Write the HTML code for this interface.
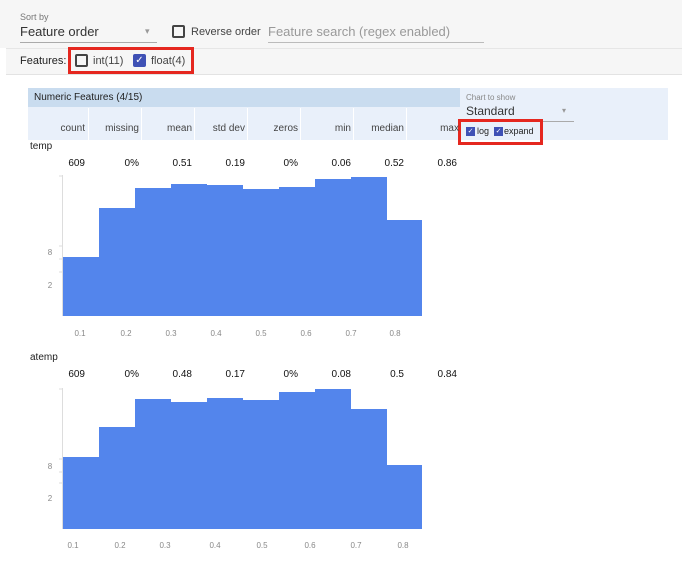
<!DOCTYPE html>
<html><head><style>
body{margin:0;width:682px;height:564px;background:#fff;font-family:"Liberation Sans",sans-serif;position:relative;overflow:hidden;color:#222}
.a{position:absolute;white-space:nowrap}
.cb{position:absolute;box-sizing:border-box}
</style></head><body>
<div class="a" style="left:0;top:0;width:682px;height:48px;background:#f6f6f6"></div>
<div class="a" style="left:6px;top:48px;width:676px;height:25px;background:#f6f6f6;border-top:1px solid #e6e6e6;border-bottom:1px solid #e3e3e3"></div>
<div class="a" style="left:20px;top:12px;font-size:9px;color:#777">Sort by</div>
<div class="a" style="left:20px;top:24px;font-size:13px;color:#333">Feature order</div>
<div class="a" style="left:145px;top:26px;font-size:9px;color:#999">▾</div>
<div class="a" style="left:20px;top:42px;width:137px;height:1px;background:#aaa"></div>
<div class="cb" style="left:172px;top:25px;width:13px;height:13px;border:2px solid #444;border-radius:2px"></div>
<div class="a" style="left:191px;top:26px;font-size:11px;color:#444">Reverse order</div>
<div class="a" style="left:268px;top:24px;font-size:13px;color:#999">Feature search (regex enabled)</div>
<div class="a" style="left:268px;top:42px;width:216px;height:1px;background:#bbb"></div>
<div class="a" style="left:20px;top:55px;font-size:11px;color:#222">Features:</div>
<div class="cb" style="left:68px;top:47px;width:126px;height:27px;border:3px solid #e5271f"></div>
<div class="cb" style="left:75px;top:54px;width:13px;height:13px;border:2px solid #444;border-radius:2px"></div>
<div class="a" style="left:93px;top:55px;font-size:11px;color:#444">int(11)</div>
<div class="cb" style="left:133px;top:54px;width:13px;height:13px;background:#3f51b5;border-radius:2px;color:#fff;font-size:10px;line-height:13px;text-align:center">✓</div>
<div class="a" style="left:151px;top:55px;font-size:11px;color:#444">float(4)</div>

<div class="a" style="left:28px;top:88px;width:432px;height:19px;background:#c9dcef"></div>
<div class="a" style="left:34px;top:92px;font-size:10px;color:#222">Numeric Features (4/15)</div>
<div class="a" style="left:28px;top:107px;width:432px;height:33px;background:#e9f0fa"></div>
<div class="a" style="left:460px;top:88px;width:208px;height:52px;background:#e9f0fa"></div>
<div class="a" style="left:466px;top:93px;font-size:8px;color:#888">Chart to show</div>
<div class="a" style="left:466px;top:104px;font-size:12px;color:#333">Standard</div>
<div class="a" style="left:562px;top:106px;font-size:8px;color:#999">▾</div>
<div class="a" style="left:466px;top:121px;width:108px;height:1px;background:#aaa"></div>
<div class="cb" style="left:458px;top:119px;width:85px;height:26px;border:3px solid #e5271f"></div>
<div class="cb" style="left:466px;top:127px;width:9px;height:9px;background:#3f51b5;color:#fff;font-size:7px;line-height:9px;text-align:center">✓</div>
<div class="a" style="left:477px;top:126px;font-size:9px">log</div>
<div class="cb" style="left:494px;top:127px;width:9px;height:9px;background:#3f51b5;color:#fff;font-size:7px;line-height:9px;text-align:center">✓</div>
<div class="a" style="left:504px;top:126px;font-size:9px">expand</div>

<div class="a" style="left:30px;top:141px;font-size:10px">temp</div>
<div class="a" style="left:30px;top:352px;font-size:10px">atemp</div>

<svg class="a" style="left:0;top:0" width="682" height="564">
<g stroke="#fff" stroke-width="1">
<line x1="88.5" y1="108" x2="88.5" y2="140"/><line x1="141.5" y1="108" x2="141.5" y2="140"/><line x1="194.5" y1="108" x2="194.5" y2="140"/><line x1="247.5" y1="108" x2="247.5" y2="140"/><line x1="300.5" y1="108" x2="300.5" y2="140"/><line x1="353.5" y1="108" x2="353.5" y2="140"/><line x1="406.5" y1="108" x2="406.5" y2="140"/>
</g>
<g font-size="10" fill="#444" text-anchor="end">
<text x="85" y="131">count</text><text x="139" y="131">missing</text><text x="192" y="131">mean</text><text x="245" y="131">std dev</text><text x="298" y="131">zeros</text><text x="351" y="131">min</text><text x="404" y="131">median</text><text x="459" y="131">max</text>
</g>
<g font-size="10" fill="#111" text-anchor="end">
<text x="85" y="166">609</text><text x="139" y="166">0%</text><text x="192" y="166">0.51</text><text x="245" y="166">0.19</text><text x="298" y="166">0%</text><text x="351" y="166">0.06</text><text x="404" y="166">0.52</text><text x="457" y="166">0.86</text>
<text x="85" y="377">609</text><text x="139" y="377">0%</text><text x="192" y="377">0.48</text><text x="245" y="377">0.17</text><text x="298" y="377">0%</text><text x="351" y="377">0.08</text><text x="404" y="377">0.5</text><text x="457" y="377">0.84</text>
</g>
<path fill="#5385ec" d="M63 316V257H99V208H135V188H171V184H207V185H243V189H279V187H315V179H351V177H387V220H422V316Z"/>
<path fill="#5385ec" d="M63 529V457H99V427H135V399H171V402H207V398H243V400H279V392H315V389H351V409H387V465H422V529Z"/>
<g stroke="#ddd"><line x1="62.5" y1="175" x2="62.5" y2="316"/><line x1="62.5" y1="388" x2="62.5" y2="529"/>
<line x1="59" y1="176" x2="63" y2="176"/><line x1="59" y1="246" x2="63" y2="246"/><line x1="59" y1="259" x2="63" y2="259"/><line x1="59" y1="272" x2="63" y2="272"/>
<line x1="59" y1="389" x2="63" y2="389"/><line x1="59" y1="459" x2="63" y2="459"/><line x1="59" y1="472" x2="63" y2="472"/><line x1="59" y1="483" x2="63" y2="483"/></g>
<g font-size="8" fill="#888" text-anchor="middle">
<text x="50" y="255">8</text><text x="50" y="288">2</text><text x="50" y="469">8</text><text x="50" y="501">2</text>
<text x="80" y="336">0.1</text><text x="126" y="336">0.2</text><text x="171" y="336">0.3</text><text x="216" y="336">0.4</text><text x="261" y="336">0.5</text><text x="306" y="336">0.6</text><text x="351" y="336">0.7</text><text x="395" y="336">0.8</text>
<text x="73" y="548">0.1</text><text x="120" y="548">0.2</text><text x="165" y="548">0.3</text><text x="215" y="548">0.4</text><text x="262" y="548">0.5</text><text x="310" y="548">0.6</text><text x="356" y="548">0.7</text><text x="403" y="548">0.8</text>
</g>
</svg>
</body></html>
